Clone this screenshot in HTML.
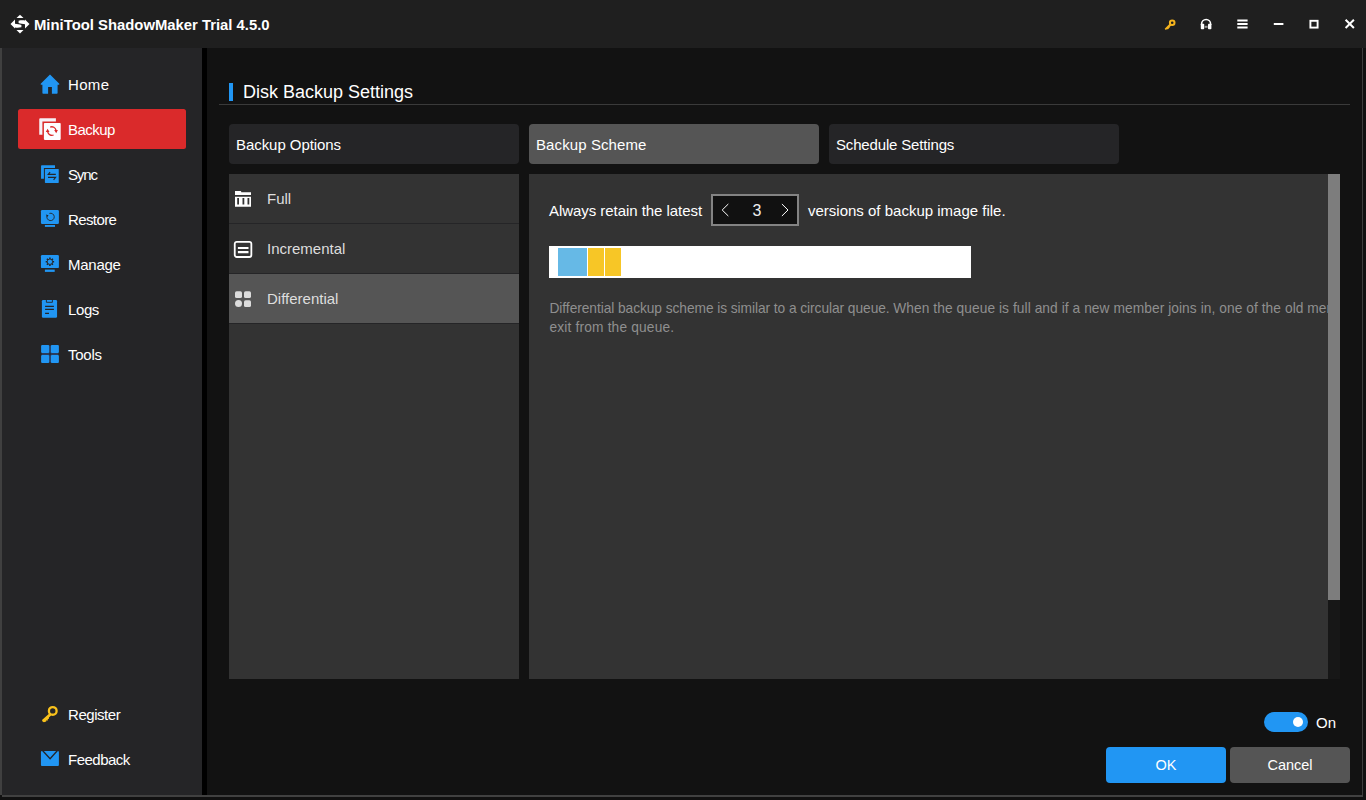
<!DOCTYPE html>
<html lang="en">
<head>
<meta charset="utf-8">
<title>MiniTool ShadowMaker Trial 4.5.0</title>
<style>
*{box-sizing:border-box;margin:0;padding:0}
html,body{width:1366px;height:800px;overflow:hidden;background:#111111}
body{position:relative;font-family:"Liberation Sans",sans-serif;color:#fff;-webkit-font-smoothing:antialiased}
.abs{position:absolute}
#titlebar{left:0;top:0;width:1366px;height:48px;background:#1f1f1f}
#title{left:34px;top:1px;height:48px;line-height:48px;font-weight:bold;font-size:14.85px;white-space:nowrap;color:#fff}
#frame-l{left:0;top:48px;width:2px;height:747px;background:#404040}
#frame-b{left:2px;top:795px;width:1361px;height:2px;background:#414141}
#frame-r{left:1362px;top:48px;width:1px;height:749px;background:#3d3d3d}
#sidebar{left:2px;top:48px;width:200px;height:747px;background:#252527}
#stripe{left:202px;top:48px;width:5px;height:747px;background:#000}
#content{left:207px;top:48px;width:1155px;height:747px;background:#121212}
.nav{left:18px;width:168px;height:40px;border-radius:2.5px}
.nav.active{background:#da2a2b}
.nav span{position:absolute;left:50px;top:1px;height:40px;line-height:40px;font-size:15px;color:#fff;white-space:nowrap}
.nav svg{position:absolute;left:22px;top:10px;width:20px;height:20px;overflow:visible}
#hbar{left:229px;top:83px;width:4px;height:18px;background:#2196f3}
#htext{left:243px;top:80px;height:24px;line-height:24px;font-size:18px;color:#fff;white-space:nowrap}
#hline{left:219px;top:104px;width:1131px;height:1px;background:#3a3a3a}
.tab{top:124px;width:290px;height:40px;border-radius:4px;background:#252527;font-size:15px;line-height:42px;padding-left:7px;color:#fff;white-space:nowrap}
.tab.active{background:#555555}
#list{left:229px;top:174px;width:290px;height:505px;background:#333333}
.row{left:0;width:290px;height:50px;border-bottom:1px solid #252527;font-size:15px;line-height:49px;color:#dedede}
.row.sel{background:#555555}
.row span{position:absolute;left:38px;top:0;white-space:nowrap}
.row svg{position:absolute;left:5px;top:16px;width:18px;height:18px;overflow:visible}
#panel{left:529px;top:174px;width:799px;height:505px;background:#333333;overflow:hidden}
#track{left:1328px;top:174px;width:12px;height:505px;background:#171717}
#thumb{left:1328px;top:174px;width:12px;height:426px;background:#7d7d7d}
.t15{font-size:15px;color:#fff;white-space:nowrap}
#spin{left:182px;top:20px;width:88px;height:32px;background:#111;border:2px solid #838383}
#bar{left:20px;top:72px;width:422px;height:32px;background:#fff}
.desc{left:20.5px;font-size:13.75px;color:#8f8f8f;white-space:nowrap;line-height:19px}
#toggle{left:1264px;top:712px;width:44px;height:20px;border-radius:10px;background:#2196f3}
#knob{left:1293px;top:717px;width:10px;height:10px;border-radius:50%;background:#fff}
#on{left:1316px;top:713px;height:20px;line-height:20px;font-size:15px;color:#fff}
.btn{top:747px;width:120px;height:36px;border-radius:4px;text-align:center;line-height:37px;font-size:14.5px;color:#fff}
#ok{left:1106px;background:#2196f3}
#cancel{left:1230px;background:#555555}
</style>
</head>
<body>
<div id="titlebar" class="abs"></div>
<div id="title" class="abs">MiniTool ShadowMaker Trial 4.5.0</div>
<svg class="abs" style="left:0;top:0;width:40px;height:48px" viewBox="0 0 40 48"><g fill="#fff"><path d="M20,14.7 L23.5,18 L16.5,18 Z"/><path d="M20,33.4 L23.5,30.1 L16.5,30.1 Z"/><path d="M10.5,24 L15,19.4 L15,23.7 C17,24 19.6,24.3 21.4,25 L21.4,27.3 C19,27.9 16.6,27.9 15,27.5 L15,28.6 Z"/><path d="M29.5,24 L25,28.6 L25,24.3 C23,24 20.4,23.7 18.6,23 L18.6,20.7 C21,20.1 23.4,20.1 25,20.5 L25,19.4 Z"/></g></svg>
<svg class="abs" style="left:1160px;top:14.5px;width:20px;height:20px" viewBox="0 0 20 20"><circle cx="12.2" cy="7.7" r="2.3" fill="none" stroke="#f5b41e" stroke-width="2"/><path fill="#f5b41e" d="M9.9,8.6 L11.6,10.3 L9.6,12 L9.9,12.8 L8.7,13 L8.8,13.9 L7.5,14.2 L5.2,14.8 L4.7,13.7 Z"/></svg>
<svg class="abs" style="left:1196px;top:14px;width:20px;height:20px" viewBox="0 0 20 20"><path fill="none" stroke="#fff" stroke-width="1.6" d="M5.6,11 V10 A4.5,4.5 0 0 1 14.6,10 V11"/><rect x="4.8" y="9.8" width="3.4" height="5.4" rx="0.8" fill="#fff"/><rect x="12" y="9.8" width="3.4" height="5.4" rx="0.8" fill="#fff"/><rect x="8.6" y="11.8" width="3" height="2" fill="#9a9a9a"/></svg>
<svg class="abs" style="left:1232px;top:14px;width:20px;height:20px" viewBox="0 0 20 20"><path fill="#fff" d="M5.3,5.6h10.3v1.9H5.3z M5.3,9.1h10.3v1.9H5.3z M5.3,12.6h10.3v1.9H5.3z"/></svg>
<svg class="abs" style="left:1268px;top:14px;width:20px;height:20px" viewBox="0 0 20 20"><rect x="5.8" y="9" width="9.6" height="2" fill="#fff"/></svg>
<svg class="abs" style="left:1304px;top:14px;width:20px;height:20px" viewBox="0 0 20 20"><rect x="6.4" y="6.8" width="7.2" height="6.8" fill="none" stroke="#fff" stroke-width="1.9"/></svg>
<svg class="abs" style="left:1340px;top:14px;width:20px;height:20px" viewBox="0 0 20 20"><path fill="none" stroke="#fff" stroke-width="2" d="M5.6,5.7 L13.9,14 M13.9,5.7 L5.6,14"/></svg>
<div id="frame-l" class="abs"></div>
<div id="frame-r" class="abs"></div>
<div id="sidebar" class="abs"></div>
<div id="stripe" class="abs"></div>
<div id="content" class="abs"></div>
<div id="frame-b" class="abs"></div>

<div class="abs nav" style="top:64px"><svg viewBox="0 0 20 20"><path fill="#2196f3" d="M10,0.5 L19.3,9.7 Q19.7,10.7 18.7,10.8 L17.6,10.8 L17.6,18.9 Q17.6,19.7 16.8,19.7 L11.9,19.7 L11.9,13.1 L8.1,13.1 L8.1,19.7 L3.2,19.7 Q2.4,19.7 2.4,18.9 L2.4,10.8 L1.3,10.8 Q0.3,10.7 0.7,9.7 Z"/></svg><span style="letter-spacing:0.35px">Home</span></div>
<div class="abs nav active" style="top:109px"><svg viewBox="0 0 20 20"><path fill="#f6f0f6" d="M0.3,-0.7 H15.9 V2.5 H2.4 V15.8 H-0.75 V0.3 Q-0.75,-0.7 0.3,-0.7 Z"/><rect x="3.9" y="4" width="16.8" height="16.9" rx="0.8" fill="#fdfdff"/><g fill="none" stroke="#da2a2b" stroke-width="1.3"><path d="M10.2,8.1 A4.3,4.3 0 0 1 16,11.2"/><path d="M13.6,16 A4.3,4.3 0 0 1 7.7,12.9"/></g><path fill="#da2a2b" d="M14.2,11 L17.9,11 L16.2,14.2 Z M9.5,13 L5.8,13 L7.6,9.8 Z"/></svg><span style="letter-spacing:-0.55px">Backup</span></div>
<div class="abs nav" style="top:154px"><svg viewBox="0 0 20 20"><path fill="#2196f3" d="M1.8,1.25 H15 V3.9 H3.9 V14.75 H1.05 V2 Q1.05,1.25 1.8,1.25 Z"/><rect x="4.9" y="5" width="13.85" height="13.9" rx="0.6" fill="#2196f3"/><g fill="none" stroke="#252527" stroke-width="1.1"><path d="M15.8,10.4 H8.2 L10.1,8.1"/><path d="M8,13.4 H15.6 L13.6,15.8"/></g></svg><span style="letter-spacing:-1.15px">Sync</span></div>
<div class="abs nav" style="top:199px"><svg viewBox="0 0 20 20"><rect x="0.94" y="1" width="17.96" height="13.9" rx="1.2" fill="#2196f3"/><rect x="4.9" y="16" width="10.1" height="1.9" fill="#2196f3"/><path fill="none" stroke="#252527" stroke-width="0.9" d="M7.1,6.6 A3.7,3.7 0 1 0 9.4,4.4"/><path fill="#252527" d="M5.9,5.4 L8.6,6.2 L7,8 Z"/></svg><span style="letter-spacing:-0.6px">Restore</span></div>
<div class="abs nav" style="top:244px"><svg viewBox="0 0 20 20"><rect x="0.94" y="1" width="17.96" height="13.1" rx="1.2" fill="#2196f3"/><rect x="4.9" y="15.6" width="9.8" height="2.3" fill="#2196f3"/><g transform="translate(9.9,7.75)"><circle r="2.7" fill="none" stroke="#252527" stroke-width="0.9"/><g stroke="#252527" stroke-width="1.5"><path d="M0,-2.7V-4.2M0,2.7V4.2M-2.7,0H-4.2M2.7,0H4.2M1.9,1.9L3,3M-1.9,1.9L-3,3M1.9,-1.9L3,-3M-1.9,-1.9L-3,-3"/></g></g></svg><span style="letter-spacing:-0.25px">Manage</span></div>
<div class="abs nav" style="top:289px"><svg viewBox="0 0 20 20"><rect x="1.9" y="1" width="15.16" height="17.8" rx="1.2" fill="#2196f3"/><path fill="none" stroke="#252527" stroke-width="0.9" d="M6.4,0.9 V3.3 H12.4 V0.9"/><g stroke="#252527" stroke-width="1.1"><path d="M5.1,7.4H13.9M5.1,10.4H13.9M5.1,14.4H9"/></g></svg><span style="letter-spacing:-0.4px">Logs</span></div>
<div class="abs nav" style="top:334px"><svg viewBox="0 0 20 20"><path fill="#2a3d5e" d="M1.6,9h16.8v2H1.6z M9.1,1.5h1.9v17H9.1z"/><rect x="9.4" y="9.3" width="1.3" height="1.4" fill="#1b1b1d"/><g fill="#2196f3"><rect x="1.1" y="1" width="8.1" height="8.06" rx="1"/><rect x="10.9" y="1" width="8" height="8.06" rx="1"/><rect x="1.1" y="10.9" width="8.1" height="8.1" rx="1"/><rect x="10.9" y="10.9" width="8" height="8.1" rx="1"/></g></svg><span style="letter-spacing:-0.25px">Tools</span></div>
<div class="abs nav" style="top:694px"><svg viewBox="0 0 20 20"><circle cx="12.75" cy="6.9" r="3.85" fill="none" stroke="#f9c21c" stroke-width="2.3"/><path fill="#f9c21c" d="M9.3,9.4 L2,16 L2.5,17.6 L3.9,18.2 L6.2,17.4 L6.2,16.4 L7.9,16.6 L7.7,15.2 L9.1,14.6 L8.9,13.4 L11.2,11.6 Z"/></svg><span style="letter-spacing:-0.45px">Register</span></div>
<div class="abs nav" style="top:739px"><svg viewBox="0 0 20 20"><rect x="0.94" y="1.9" width="17.96" height="15.2" rx="1" fill="#2196f3"/><path fill="none" stroke="#252527" stroke-width="1.3" d="M2.3,1.3 L10.1,9.7 L17.7,1.3"/></svg><span style="letter-spacing:-0.5px">Feedback</span></div>

<div id="hbar" class="abs"></div>
<div id="htext" class="abs">Disk Backup Settings</div>
<div id="hline" class="abs"></div>

<div class="abs tab" style="left:229px;letter-spacing:-0.06px">Backup Options</div>
<div class="abs tab active" style="left:529px;letter-spacing:0.1px">Backup Scheme</div>
<div class="abs tab" style="left:829px;letter-spacing:-0.16px">Schedule Settings</div>

<div id="list" class="abs">
  <div class="abs row" style="top:0"><svg viewBox="0 0 18 18"><path fill="#fff" d="M1,1 H6.6 Q7.2,1 7.3,2.3 H17 V5 H1 Z"/><path fill="#fff" d="M1,6.7 H17 V16.8 H1 Z M3.2,8 V14.6 H5 V8 Z M8.5,8 V14.6 H10.3 V8 Z M13.5,8 V14.6 H15.3 V8 Z" fill-rule="evenodd"/></svg><span>Full</span></div>
  <div class="abs row" style="top:50px"><svg viewBox="0 0 18 18"><rect x="0.75" y="1.8" width="16.6" height="15.2" rx="2" fill="none" stroke="#fff" stroke-width="1.8"/><path fill="#fff" d="M3.9,6.9h10.6v2H3.9z M3.9,11.1h10.6v2.2H3.9z"/></svg><span>Incremental</span></div>
  <div class="abs row sel" style="top:100px"><svg viewBox="0 0 18 18"><g fill="#dcdcdc"><rect x="1" y="1.3" width="7" height="6.7" rx="1.6"/><rect x="10" y="1.3" width="7" height="6.7" rx="1.6"/><circle cx="4.5" cy="13.6" r="3.5"/><rect x="10" y="10.3" width="7" height="6.7" rx="1.6"/></g></svg><span>Differential</span></div>
</div>

<div id="panel" class="abs">
  <div class="abs t15" style="left:20px;top:27px;line-height:20px;letter-spacing:-0.05px">Always retain the latest</div>
  <div id="spin" class="abs"><svg class="abs" style="left:0;top:0;width:84px;height:28px" viewBox="0 0 84 28"><g fill="none" stroke="#fff" stroke-width="1"><path d="M15.3,8 L9.2,14 L15.3,20"/><path d="M68.9,8 L75,14 L68.9,20"/></g></svg><div class="abs" style="left:0;top:0;width:84px;height:28px;line-height:30px;text-align:center;font-size:16px;color:#eee;padding-left:4px">3</div></div>
  <div class="abs t15" style="left:279px;top:27px;line-height:20px">versions of backup image file.</div>
  <div id="bar" class="abs">
    <div class="abs" style="left:9px;top:2px;width:29px;height:28px;background:#66b9e6"></div>
    <div class="abs" style="left:39px;top:2px;width:16px;height:28px;background:#f7c626"></div>
    <div class="abs" style="left:56px;top:2px;width:16px;height:28px;background:#f7c626"></div>
  </div>
  <div class="abs desc" style="top:125px"><span style="letter-spacing:-0.062px">Differential backup scheme is similar to a circular queue. </span><span style="letter-spacing:0.064px">When the queue is full and if a new member joins in, one of the old members will</span></div>
  <div class="abs desc" style="top:144px;letter-spacing:0.16px">exit from the queue.</div>
</div>
<div id="track" class="abs"></div>
<div id="thumb" class="abs"></div>

<div id="toggle" class="abs"></div>
<div id="knob" class="abs"></div>
<div id="on" class="abs">On</div>
<div id="ok" class="abs btn">OK</div>
<div id="cancel" class="abs btn">Cancel</div>
</body>
</html>
